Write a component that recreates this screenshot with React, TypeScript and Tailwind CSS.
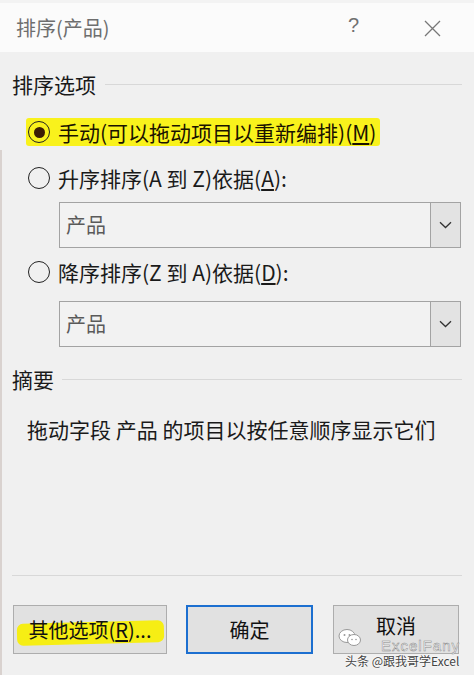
import React from "react";

const font = { fontFamily: '"Noto Sans CJK SC", "Noto Sans", sans-serif' };

function Radio({ checked }: { checked?: boolean }) {
  return (
    <span className="w-[22px] h-[22px] rounded-full border-[1.5px] border-[#222] flex items-center justify-center shrink-0 bg-transparent">
      {checked && <span className="w-[11px] h-[11px] rounded-full bg-[#3b1d05]" />}
    </span>
  );
}

function Combo() {
  return (
    <div className="ml-[59px] w-[402px] h-[46px] border border-[#a3a3a3] bg-[#f2f2f2] flex">
      <div className="flex-1 flex items-center pl-[6px] text-[20px] text-[#5a5a5a] leading-none">产品</div>
      <div className="w-[30px] bg-[#e3e3e3] border-l border-[#a3a3a3] flex items-center justify-center">
        <svg width="13" height="8" viewBox="0 0 13 8">
          <path d="M1 1.2 L6.5 6.5 L12 1.2" fill="none" stroke="#333" strokeWidth="1.3" />
        </svg>
      </div>
    </div>
  );
}

function Header({ text, lineStart }: { text: string; lineStart: number }) {
  return (
    <div className="h-[36px] flex items-center pl-[12px] pr-[12px]">
      <span className="text-[21px] text-[#1a1a1a] leading-none" style={{ width: lineStart - 12 }}>{text}</span>
      <div className="flex-1 h-px bg-[#d8d8d8]" />
    </div>
  );
}

export default function App() {
  return (
    <div className="w-[474px] h-[675px] bg-[#f0f0f0] relative overflow-hidden flex flex-col" style={font}>
      {/* title bar */}
      <div className="h-[52px] bg-[#fbfbfb] flex items-center pl-[16px] relative shrink-0 border-t-[3px] border-[#f3f3f3]">
        <span className="text-[20px] text-[#6e6e6e] leading-none">排序(产品)</span>
        <span className="absolute left-[348px] top-[12px] text-[20px] text-[#707070] leading-none" style={{ fontFamily: '"Liberation Sans", sans-serif' }}>?</span>
        <svg className="absolute left-[424px] top-[17px]" width="17" height="17" viewBox="0 0 17 17">
          <path d="M1 1 L16 16 M16 1 L1 16" stroke="#777" strokeWidth="1.3" />
        </svg>
      </div>

      <div className="mt-[14px]">
        <Header text="排序选项" lineStart={105} />
      </div>

      {/* radio 1 */}
      <div className="mt-[16px] h-[28px] flex items-center">
        <div className="ml-[26px] h-[28px] pl-[2px] pr-[4px] flex items-center gap-[8px] bg-[#f9f21c] rounded-[3px]">
          <Radio checked />
          <span className="text-[21px] text-[#1a1200] leading-none">手动(可以拖动项目以重新编排)(<span className="underline underline-offset-2">M</span>)</span>
        </div>
      </div>

      {/* radio 2 */}
      <div className="mt-[18px] h-[28px] flex items-center pl-[28px] gap-[8px]">
        <Radio />
        <span className="text-[21px] text-[#1a1a1a] leading-none">升序排序(A 到 Z)依据(<span className="underline underline-offset-2">A</span>):</span>
      </div>

      <div className="mt-[10px]">
        <Combo />
      </div>

      {/* radio 3 */}
      <div className="mt-[10px] h-[28px] flex items-center pl-[28px] gap-[8px]">
        <Radio />
        <span className="text-[21px] text-[#1a1a1a] leading-none">降序排序(Z 到 A)依据(<span className="underline underline-offset-2">D</span>):</span>
      </div>

      <div className="mt-[15px]">
        <Combo />
      </div>

      <div className="mt-[14px]">
        <Header text="摘要" lineStart={62} />
      </div>

      <div className="mt-[18px] h-[28px] flex items-center pl-[27px]">
        <span className="text-[21px] text-[#1a1a1a] leading-none">拖动字段 产品 的项目以按任意顺序显示它们</span>
      </div>

      {/* bottom separator */}
      <div className="mt-[132px] mx-[12px] h-px bg-[#d8d8d8]" />

      {/* buttons */}
      <div className="mt-[29px] flex items-center pl-[13px]">
        <div className="w-[154px] h-[49px] bg-[#e1e1e1] border border-[#adadad] flex items-center justify-center relative">
          <div className="absolute left-[3px] right-[2px] top-[16px] h-[22px] bg-[#f6ee14] rounded-[6px] -rotate-[1.5deg]" />
          <span className="relative text-[20px] text-[#111] leading-none">其他选项(<span className="underline underline-offset-2">R</span>)...</span>
        </div>
        <div className="ml-[19px] w-[127px] h-[49px] bg-[#e1e1e1] border-2 border-[#1c6fd0] flex items-center justify-center">
          <span className="text-[20px] text-[#111] leading-none">确定</span>
        </div>
        <div className="ml-[20px] w-[126px] h-[49px] bg-[#e1e1e1] border border-[#adadad] flex items-center justify-center">
          <span className="text-[20px] text-[#111] leading-none -mt-[8px]">取消</span>
        </div>
      </div>

      {/* left edge strip */}
      <div className="absolute left-0 top-[150px] bottom-0 w-[2px] bg-[#d9d2cf]" />

      {/* watermark */}
      <svg className="absolute left-[338px] top-[628px]" width="24" height="20" viewBox="0 0 24 20">
        <ellipse cx="9" cy="8" rx="8" ry="6.5" fill="#fff" stroke="#999" strokeWidth="1" />
        <ellipse cx="16" cy="12" rx="6.5" ry="5.5" fill="#fff" stroke="#999" strokeWidth="1" />
        <circle cx="6.5" cy="7" r="1" fill="#999" />
        <circle cx="11.5" cy="7" r="1" fill="#999" />
        <circle cx="14" cy="11.5" r="0.8" fill="#999" />
        <circle cx="18" cy="11.5" r="0.8" fill="#999" />
      </svg>
      <div className="absolute left-[381px] top-[638px] text-[15px] text-[#ffffff] leading-none tracking-[1px]" style={{ fontFamily: '"Liberation Sans", sans-serif', WebkitTextStroke: "0.5px #888" }}>ExcelFany</div>
      <div className="absolute left-[345px] top-[655px] text-[12px] text-[#444] leading-none" style={{ textShadow: "0 0 2px #fff, 0 0 2px #fff" }}>头条 @跟我哥学Excel</div>
    </div>
  );
}
